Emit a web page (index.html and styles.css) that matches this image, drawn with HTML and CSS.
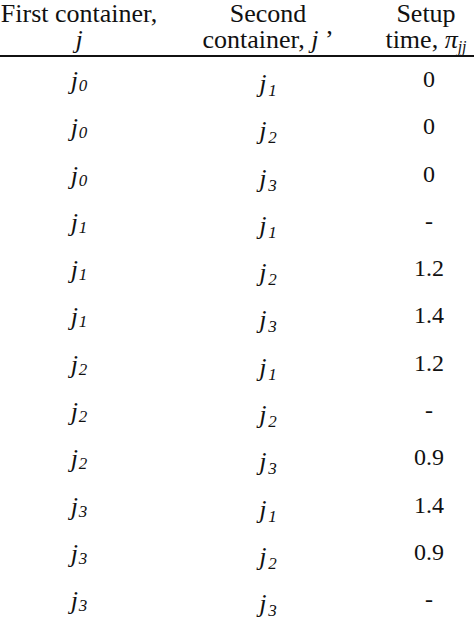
FILE: index.html
```html
<!DOCTYPE html>
<html>
<head>
<meta charset="utf-8">
<link rel="stylesheet" href="styles.css">
</head>
<body>
<div class="table">
  <div class="head">
    <div class="hc c1">First container,<br><i>j</i></div>
    <div class="hc c2">Second<br>container, <i>j</i> &rsquo;</div>
    <div class="hc c3">Setup<br>time, <i>&pi;<sub class="hs">jj</sub></i></div>
  </div>
  <div class="body">
    <div class="c1"><i>j</i><sub class="s1">0</sub></div><div class="c2"><i>j</i><sub class="s2">1</sub></div><div class="c3">0</div>
    <div class="c1"><i>j</i><sub class="s1">0</sub></div><div class="c2"><i>j</i><sub class="s2">2</sub></div><div class="c3">0</div>
    <div class="c1"><i>j</i><sub class="s1">0</sub></div><div class="c2"><i>j</i><sub class="s2">3</sub></div><div class="c3">0</div>
    <div class="c1"><i>j</i><sub class="s1">1</sub></div><div class="c2"><i>j</i><sub class="s2">1</sub></div><div class="c3">-</div>
    <div class="c1"><i>j</i><sub class="s1">1</sub></div><div class="c2"><i>j</i><sub class="s2">2</sub></div><div class="c3">1.2</div>
    <div class="c1"><i>j</i><sub class="s1">1</sub></div><div class="c2"><i>j</i><sub class="s2">3</sub></div><div class="c3">1.4</div>
    <div class="c1"><i>j</i><sub class="s1">2</sub></div><div class="c2"><i>j</i><sub class="s2">1</sub></div><div class="c3">1.2</div>
    <div class="c1"><i>j</i><sub class="s1">2</sub></div><div class="c2"><i>j</i><sub class="s2">2</sub></div><div class="c3">-</div>
    <div class="c1"><i>j</i><sub class="s1">2</sub></div><div class="c2"><i>j</i><sub class="s2">3</sub></div><div class="c3">0.9</div>
    <div class="c1"><i>j</i><sub class="s1">3</sub></div><div class="c2"><i>j</i><sub class="s2">1</sub></div><div class="c3">1.4</div>
    <div class="c1"><i>j</i><sub class="s1">3</sub></div><div class="c2"><i>j</i><sub class="s2">2</sub></div><div class="c3">0.9</div>
    <div class="c1"><i>j</i><sub class="s1">3</sub></div><div class="c2"><i>j</i><sub class="s2">3</sub></div><div class="c3">-</div>
  </div>
</div>
</body>
</html>
```

FILE: styles.css
```css
* {
  font-family: "Liberation Serif", "Times New Roman", serif;
}
html, body {
  margin: 0;
  padding: 0;
  background: #fff;
}
body {
  color: #111;
  width: 474px;
  height: 623px;
  overflow: hidden;
}
.table {
  width: 474px;
}
.head {
  display: grid;
  grid-template-columns: 158px 220px 96px;
  font-size: 26px;
  line-height: 26px;
  padding-top: 1px;
  padding-bottom: 2px;
  border-bottom: 2px solid #111;
}
.hc {
  text-align: center;
  white-space: nowrap;
}
.hs {
  font-size: 16px;
  vertical-align: -4px;
  line-height: 0;
}
.body {
  display: grid;
  grid-template-columns: 158px 220px 96px;
  grid-auto-rows: 47.3px;
  font-size: 24px;
  line-height: 47px;
}
.body > div {
  text-align: center;
  white-space: nowrap;
}
.body .c2 {
  padding-top: 3px;
}
.body .c3 {
  padding-left: 6px;
  margin-top: -1px;
}
.body i {
  font-size: 26px;
}
sub {
  font-style: italic;
  line-height: 0;
}
.s1 {
  font-size: 17px;
  vertical-align: -2px;
  margin-left: 1px;
}
.s2 {
  font-size: 17px;
  vertical-align: -4px;
  margin-left: 2px;
}
```
